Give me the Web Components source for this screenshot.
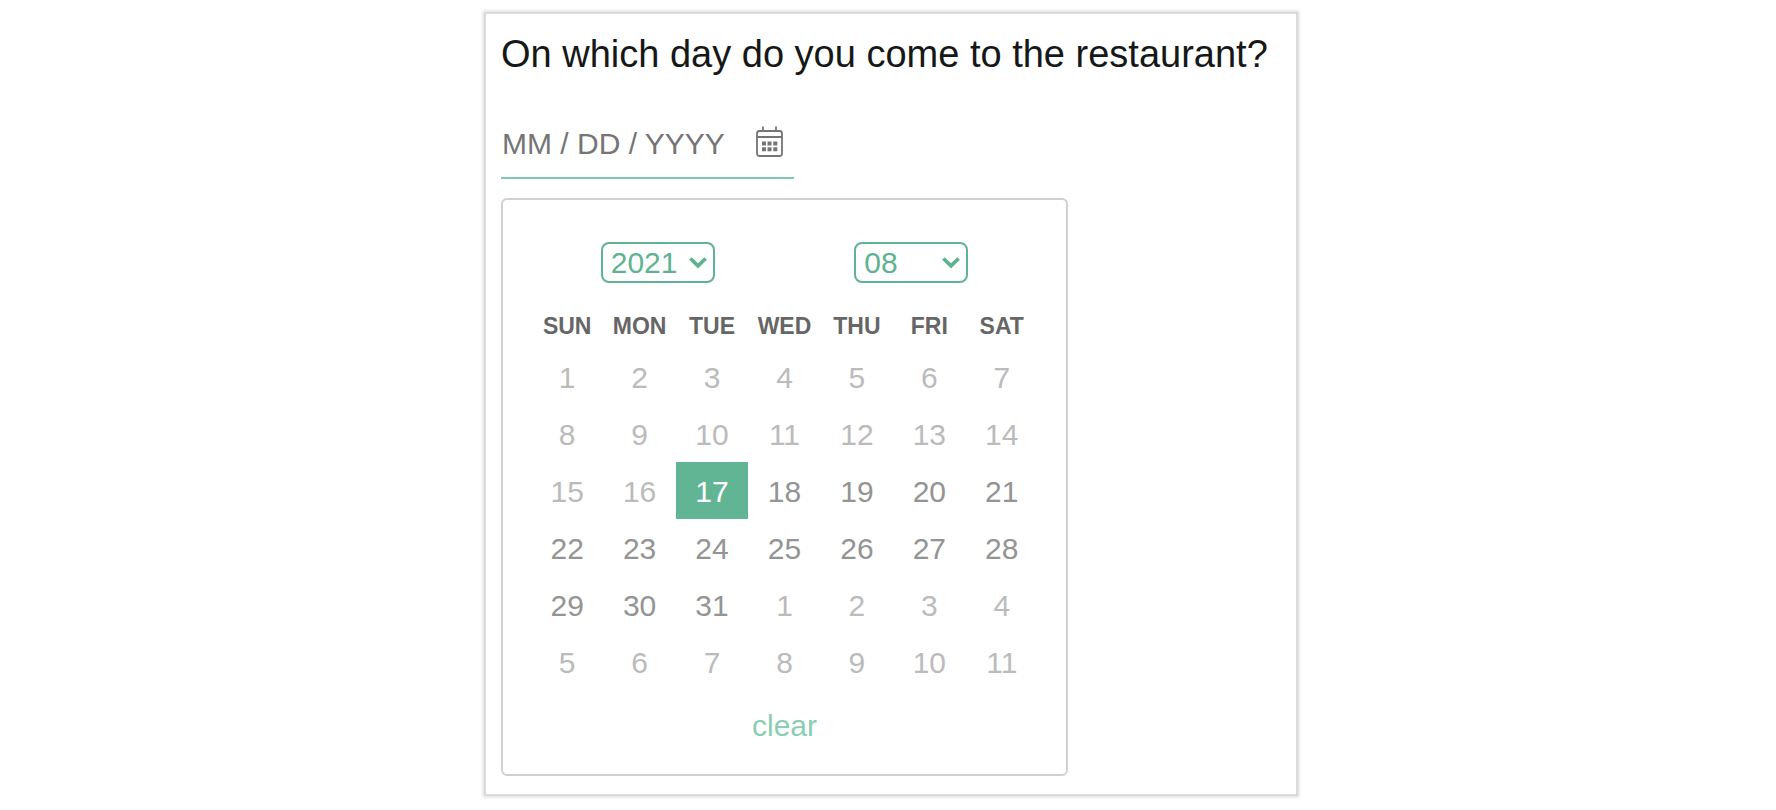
<!DOCTYPE html>
<html lang="en">
<head>
<meta charset="utf-8">
<title>Restaurant visit</title>
<style>
  html { background: #fff; }
  body {
    margin: 0;
    padding: 14px 0 16px 6px;
    font-family: "Liberation Sans", Arial, sans-serif;
    color: #161818;
  }
</style>
</head>
<body>
<question-card>
  <span slot="title">On which day do you come to the restaurant?</span>
  <date-field></date-field>
  <date-picker year="2021" month="8" day="17"></date-picker>
</question-card>

<script>
class QuestionCard extends HTMLElement {
  constructor() {
    super();
    this.attachShadow({ mode: "open" }).innerHTML = `
      <style>
        :host {
          display: block;
          box-sizing: border-box;
          width: 100%;
          max-width: 810px;
          margin: 0 auto;
          padding: 17px 15px 18px;
          background: #fff;
          box-shadow: 0 0 0 2px #dadada, 0 0 3px 3px #d8d8d8;
        }
        h1 { margin: 0 0 33px; font-size: 38px; font-weight: 400; line-height: 46px; }
      </style>
      <h1><slot name="title"></slot></h1>
      <slot></slot>`;
  }
}

class DateField extends HTMLElement {
  constructor() {
    super();
    this.attachShadow({ mode: "open" }).innerHTML = `
      <style>
        :host {
          display: flex;
          align-items: center;
          box-sizing: border-box;
          max-width: 293px;
          margin-bottom: 19px;
          border-bottom: 2px solid #80caad;
        }
        input {
          flex: 1;
          min-width: 0;
          height: 67px;
          padding: 0 0 0 1px;
          border: 0;
          outline: 0;
          background: none;
          font: 30px/34px "Liberation Sans", Arial, sans-serif;
          color: #666;
        }
        input::placeholder { color: #757575; opacity: 1; }
        button { display: flex; margin: 0 11px 4px; padding: 0; border: 0; background: none; color: #757575; cursor: pointer; }
      </style>
      <input type="text" placeholder="MM / DD / YYYY" aria-label="Date">
      <button type="button" aria-label="Open calendar">
        <svg width="27" height="31" viewBox="0 0 27 31" fill="none" stroke="currentColor">
          <rect x="1" y="5" width="25" height="25" rx="2.5" stroke-width="1.8"/>
          <path d="M1 11H26M7 .5V5M20 .5V5" stroke-width="1.8"/>
          <path d="M6 17.5h4M11.5 17.5h4M17.3 17.5h4M6 23.3h4M11.5 23.3h4M17.3 23.3h4" stroke-width="4"/>
        </svg>
      </button>`;
  }
}

class PickerSelect extends HTMLElement {
  connectedCallback() {
    const options = this.getAttribute("options").split(",");
    const value = this.getAttribute("value");
    this.attachShadow({ mode: "open" }).innerHTML = `
      <style>
        :host { display: grid; width: 114px; color: #5fb392; }
        select, svg { grid-area: 1 / 1; }
        select {
          appearance: none;
          box-sizing: border-box;
          width: 100%;
          height: 41px;
          margin: 0;
          padding: 0 8px;
          border: 2px solid #5fb392;
          border-radius: 8px;
          background: #fff;
          font: 30px/36px "Liberation Sans", Arial, sans-serif;
          color: inherit;
        }
        svg { justify-self: end; align-self: center; margin-right: 8px; pointer-events: none; }
      </style>
      <select aria-label="${this.getAttribute("label")}">
        ${options.map(o => `<option${o === value ? " selected" : ""}>${o}</option>`).join("")}
      </select>
      <svg width="18" height="12" viewBox="0 0 18 12" fill="none" stroke="currentColor" stroke-width="3.8">
        <path d="M1.4 1.5L9 8.8L16.6 1.5"/>
      </svg>`;
  }
}

class DatePicker extends HTMLElement {
  connectedCallback() {
    const year = +this.getAttribute("year");
    const month = +this.getAttribute("month");
    const today = +this.getAttribute("day");
    const offset = new Date(year, month - 1, 1).getDay();
    const pad = n => String(n).padStart(2, "0");
    let rows = "";
    for (let week = 0; week < 6; week++) {
      rows += "<tr>";
      for (let d = 0; d < 7; d++) {
        const date = new Date(year, month - 1, 1 - offset + week * 7 + d);
        const inMonth = date.getMonth() === month - 1;
        const n = date.getDate();
        const off = !inMonth || n < today;
        const on = inMonth && n === today;
        rows += `<td><button type="button"${off ? " disabled" : ""}${on ? ' aria-pressed="true"' : ""}>${n}</button></td>`;
      }
      rows += "</tr>";
    }
    this.attachShadow({ mode: "open" }).innerHTML = `
      <style>
        :host {
          display: block;
          box-sizing: border-box;
          max-width: 567px;
          padding: 42px 28px 14px;
          border: 2px solid #d0d0d0;
          border-radius: 6px;
        }
        .selects { display: grid; grid-template-columns: 1fr 1fr; justify-items: center; margin-bottom: 21px; }
        table { width: 100%; table-layout: fixed; border-collapse: collapse; }
        th { height: 44px; padding: 0; font-size: 23px; line-height: 26px; color: #666; }
        td { padding: 0; }
        button {
          display: block;
          box-sizing: border-box;
          width: 100%;
          height: 57px;
          margin: 0;
          padding: 2px 0 0;
          border: 0;
          background: none;
          font: 30px/34px "Liberation Sans", Arial, sans-serif;
          color: #949494;
          cursor: pointer;
        }
        button:disabled { color: #bbb; cursor: default; }
        button[aria-pressed] { background: #62b594; color: #fff; }
        .clear { width: auto; height: 70px; margin: 0 auto; color: #8bcdb3; }
      </style>
      <div class="selects">
        <picker-select label="Year" options="2021,2022,2023" value="${year}"></picker-select>
        <picker-select label="Month" options="${Array.from({ length: 12 }, (_, i) => pad(i + 1))}" value="${pad(month)}"></picker-select>
      </div>
      <table>
        <thead><tr>${["SUN", "MON", "TUE", "WED", "THU", "FRI", "SAT"].map(d => `<th scope="col">${d}</th>`).join("")}</tr></thead>
        <tbody>${rows}</tbody>
      </table>
      <button type="button" class="clear">clear</button>`;
  }
}

customElements.define("question-card", QuestionCard);
customElements.define("date-field", DateField);
customElements.define("picker-select", PickerSelect);
customElements.define("date-picker", DatePicker);
</script>
</body>
</html>
